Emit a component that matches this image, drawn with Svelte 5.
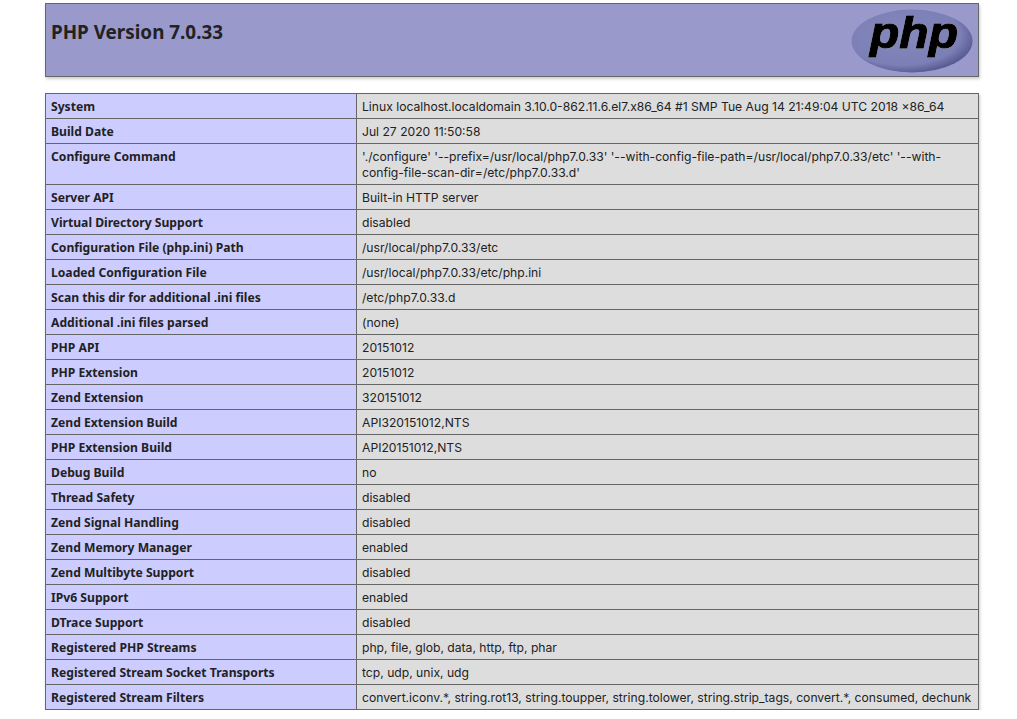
<script lang="ts">
    const rows = [
        ['System', 'Linux localhost.localdomain 3.10.0-862.11.6.el7.x86_64 #1 SMP Tue Aug 14 21:49:04 UTC 2018 x86_64'],
        ['Build Date', 'Jul 27 2020 11:50:58'],
        ['Configure Command', "'./configure' '--prefix=/usr/local/php7.0.33' '--with-config-file-path=/usr/local/php7.0.33/etc' '--with-config-file-scan-dir=/etc/php7.0.33.d'"],
        ['Server API', 'Built-in HTTP server'],
        ['Virtual Directory Support', 'disabled'],
        ['Configuration File (php.ini) Path', '/usr/local/php7.0.33/etc'],
        ['Loaded Configuration File', '/usr/local/php7.0.33/etc/php.ini'],
        ['Scan this dir for additional .ini files', '/etc/php7.0.33.d'],
        ['Additional .ini files parsed', '(none)'],
        ['PHP API', '20151012'],
        ['PHP Extension', '20151012'],
        ['Zend Extension', '320151012'],
        ['Zend Extension Build', 'API320151012,NTS'],
        ['PHP Extension Build', 'API20151012,NTS'],
        ['Debug Build', 'no'],
        ['Thread Safety', 'disabled'],
        ['Zend Signal Handling', 'disabled'],
        ['Zend Memory Manager', 'enabled'],
        ['Zend Multibyte Support', 'disabled'],
        ['IPv6 Support', 'enabled'],
        ['DTrace Support', 'disabled'],
        ['Registered PHP Streams', 'php, file, glob, data, http, ftp, phar'],
        ['Registered Stream Socket Transports', 'tcp, udp, unix, udg'],
        ['Registered Stream Filters', 'convert.iconv.*, string.rot13, string.toupper, string.tolower, string.strip_tags, convert.*, consumed, dechunk']
    ];
</script>

<div class="center">

    <div class="header">
        <h1>PHP Version 7.0.33</h1>

        <svg class="logo" width="122" height="64" viewBox="0 0 122 64">
            <defs>
                <radialGradient id="oval" cx="0.42" cy="0.4" r="0.62">
                    <stop offset="0" stop-color="#8589bd" />
                    <stop offset="0.78" stop-color="#7b7fb5" />
                    <stop offset="1" stop-color="#565a91" />
                </radialGradient>
            </defs>
            <ellipse cx="61" cy="32" rx="60.5" ry="31.5" fill="url(#oval)" />
            <text class="logo-text" x="19" y="39" textLength="88" lengthAdjust="spacingAndGlyphs">php</text>
        </svg>
    </div>

    <table>
        <tbody>
            {#each rows as [name, value]}
                <tr>
                    <td class="e">{name}</td>
                    <td class="v">{value}</td>
                </tr>
            {/each}
        </tbody>
    </table>

</div>

<style>

    :global(body) {
        background-color: #fff;
        color: #222;
        font-family: Inter, "Noto Sans", sans-serif;
    }

    .center {
        width: 934px;
        padding: 3px 0 0 45px;
    }

    .header {
        display: flex;
        justify-content: space-between;
        height: 72px;
        width: 932px;
        border: 1px solid #666;
        background-color: #99c;
        box-shadow: 1px 2px 3px #ccc;
    }

    h1 {
        margin: 0;
        padding: 16px 5px 0;
        font-family: "Noto Sans", sans-serif;
        font-size: 18.85px;
        line-height: 24px;
        font-weight: bold;
    }

    .logo {
        margin: 5px 5px 0 0;
        overflow: visible;
    }

    .logo-text {
        font-family: "Liberation Sans", sans-serif;
        font-size: 44px;
        font-weight: bold;
        font-style: italic;
        fill: #000;
        stroke: #000;
        stroke-width: 1.2px;
        filter: drop-shadow(0 0 0.6px #fff);
    }

    table {
        width: 934px;
        margin-top: 16px;
        border-collapse: collapse;
        table-layout: fixed;
        box-shadow: 1px 2px 3px #ccc;
    }

    td {
        border: 1px solid #666;
        padding: 5px 5px 3px;
        font-size: 12.15px;
        line-height: 16px;
        vertical-align: baseline;
        overflow-wrap: break-word;
    }

    .e {
        width: 300px;
        background-color: #ccf;
        font-family: "Noto Sans", sans-serif;
        font-weight: bold;
    }

    .v {
        background-color: #ddd;
    }

</style>
